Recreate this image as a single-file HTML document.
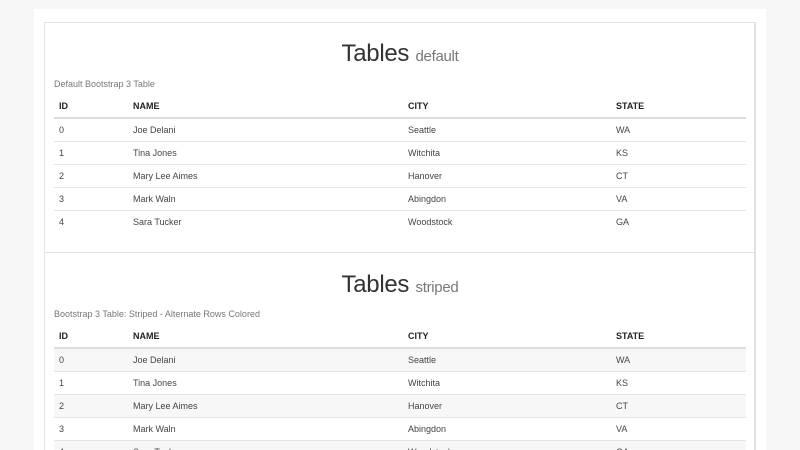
<!DOCTYPE html>
<html style="overflow:hidden;height:450px"><head><meta charset="utf-8"><style>
*{margin:0;padding:0;box-sizing:border-box}
body{width:800px;height:450px;overflow:hidden;background:#f7f7f7;font-family:"Liberation Sans",sans-serif;color:#333;position:relative}
.wrap{position:absolute;left:34px;top:9px;width:732px;height:441px;background:#fff;overflow:hidden}
.panel{position:absolute;left:10px;top:13px;width:712px;height:428px;border:1px solid #e3e3e3;border-width:1px 2px 0 1px;overflow:hidden}
.sec{position:absolute;left:0;width:710px}
h2{position:absolute;left:0;width:100%;text-align:center;font-weight:normal;font-size:24px;color:#333;letter-spacing:-0.3px}
h2 small{font-size:15px;color:#777}
.cap{position:absolute;left:9px;font-size:9px;color:#777}
table{position:absolute;left:9px;width:692px;border-collapse:collapse;font-size:9px;color:#444}
th{text-align:left;font-weight:bold;height:24px;padding-left:5px;border-bottom:2px solid #ddd;color:#222}
td{height:23px;padding-left:5px;border-top:1px solid #e4e4e4}
tbody tr:first-child td{border-top:none}
.striped tbody tr:nth-child(odd){background:#f7f7f7}
</style></head><body>
<div class="wrap"><div class="panel">
<div class="sec" style="top:0;height:230px;border-bottom:1px solid #e3e3e3">
<h2 style="top:17px">Tables <small>default</small></h2>
<div class="cap" style="top:56px">Default Bootstrap 3 Table</div>
<table style="top:71px"><colgroup><col style="width:74px"><col style="width:275px"><col style="width:208px"><col></colgroup>
<thead><tr><th>ID</th><th>NAME</th><th>CITY</th><th>STATE</th></tr></thead>
<tbody><tr><td>0</td><td>Joe Delani</td><td>Seattle</td><td>WA</td></tr>
<tr><td>1</td><td>Tina Jones</td><td>Witchita</td><td>KS</td></tr>
<tr><td>2</td><td>Mary Lee Aimes</td><td>Hanover</td><td>CT</td></tr>
<tr><td>3</td><td>Mark Waln</td><td>Abingdon</td><td>VA</td></tr>
<tr><td>4</td><td>Sara Tucker</td><td>Woodstock</td><td>GA</td></tr></tbody></table>
</div>
<div class="sec" style="top:231px;height:197px;overflow:hidden">
<h2 style="top:17px">Tables <small>striped</small></h2>
<div class="cap" style="top:55px">Bootstrap 3 Table: Striped - Alternate Rows Colored</div>
<table class="striped" style="top:70px"><colgroup><col style="width:74px"><col style="width:275px"><col style="width:208px"><col></colgroup>
<thead><tr><th>ID</th><th>NAME</th><th>CITY</th><th>STATE</th></tr></thead>
<tbody><tr><td>0</td><td>Joe Delani</td><td>Seattle</td><td>WA</td></tr>
<tr><td>1</td><td>Tina Jones</td><td>Witchita</td><td>KS</td></tr>
<tr><td>2</td><td>Mary Lee Aimes</td><td>Hanover</td><td>CT</td></tr>
<tr><td>3</td><td>Mark Waln</td><td>Abingdon</td><td>VA</td></tr>
<tr><td>4</td><td>Sara Tucker</td><td>Woodstock</td><td>GA</td></tr></tbody></table>
</div>
</div></div>
</body></html>
